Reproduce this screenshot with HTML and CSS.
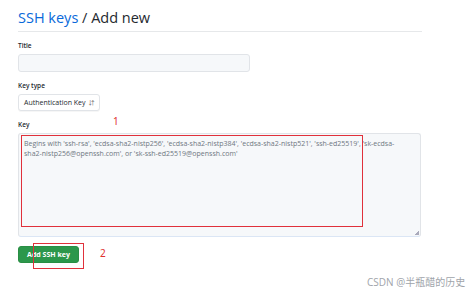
FILE: index.html
```html
<!DOCTYPE html>
<html>
<head>
<meta charset="utf-8">
<link rel="stylesheet" href="styles.css">
</head>
<body>
<div class="page">
  <h1 class="title"><a class="crumb">SSH keys</a> / Add new</h1>
  <form class="form">
    <div class="group">
      <label class="label">Title</label>
      <div class="input"></div>
    </div>
    <div class="group">
      <label class="label">Key type</label>
      <div class="select">Authentication Key <span class="arrows">&#8693;</span></div>
    </div>
    <div class="group key-group">
      <label class="label">Key</label>
      <div class="textarea">Begins with 'ssh-rsa', 'ecdsa-sha2-nistp256', 'ecdsa-sha2-nistp384', 'ecdsa-sha2-nistp521', 'ssh-ed25519', 'sk-ecdsa-sha2-nistp256@openssh.com', or 'sk-ssh-ed25519@openssh.com'<span class="grip"></span></div>
      <span class="mark mark1">1</span>
      <span class="box box1"></span>
    </div>
    <div class="actions">
      <button type="button" class="btn">Add SSH key</button>
      <span class="mark mark2">2</span>
      <span class="box box2"></span>
    </div>
  </form>
  <div class="watermark">CSDN @半瓶醋的历史</div>
</div>
</body>
</html>
```
FILE: styles.css
```css
html, body { margin: 0; padding: 0; background: #fff; }
body { font-family: "Open Sans", "Noto Sans", "Noto Sans CJK SC", sans-serif; color: #24292f; }
.page { position: relative; width: 474px; height: 292px; padding: 8px 0 0 18px; box-sizing: border-box; overflow: hidden; }
.title { margin: 0; width: 404px; font-size: 14.5px; font-weight: 400; line-height: 20px; padding-bottom: 3px; border-bottom: 1px solid #e6e8ea; color: #24292f; }
.crumb { color: #0969da; }
.form { display: flex; flex-direction: column; }
.group { display: flex; flex-direction: column; position: relative; }
.label { font-size: 6.5px; font-weight: 600; line-height: 10px; margin-top: 9px; margin-bottom: 3px; }
.input { width: 230px; height: 16px; border: 1px solid #e1e4e8; border-radius: 3px; background: #f6f8fa; }
.select { align-self: flex-start; width: 82px; height: 17px; box-sizing: border-box; border: 1px solid #e1e4e8; border-radius: 3px; background: #fff; font-size: 7px; color: #24292f; line-height: 15px; padding-left: 5px; box-shadow: 0 1px 0 rgba(27,31,35,0.04); white-space: nowrap; }
.arrows { font-size: 6px; color: #555; margin-left: 1px; }
.key-group .label { margin-top: 9px; }
.textarea { position: relative; width: 403px; height: 104px; box-sizing: border-box; border: 1px solid #e1e4e8; border-bottom-color: #dbe6f5; border-radius: 3px; background: #f6f8fa; font-size: 7px; line-height: 10px; color: #6e7781; padding: 5px 18px 0 5px; }
.grip { position: absolute; right: 1px; bottom: 1px; width: 4px; height: 4px; background: linear-gradient(135deg, transparent 50%, #aab 50%); }
.mark { position: absolute; color: #e0312f; font-size: 10px; font-family: "Noto Sans", sans-serif; line-height: 10px; }
.mark1 { left: 95px; top: 5px; }
.box { position: absolute; border: 1.5px solid #e0313b; box-sizing: border-box; }
.box1 { left: 3px; top: 24px; width: 342px; height: 92px; }
.actions { position: relative; margin-top: 9px; display: flex; }
.btn { width: 61px; height: 17px; border: 1px solid #2a8e44; border-radius: 3px; background: #2c974b; color: #fff; font-family: inherit; font-size: 7px; font-weight: 700; padding: 0; line-height: 15px; }
.mark2 { left: 82px; top: 2px; }
.box2 { left: 15px; top: -3px; width: 51px; height: 26px; }
.watermark { position: absolute; left: 367px; top: 276px; font-size: 10px; color: #a0a4aa; line-height: 12px; white-space: nowrap; }
```
